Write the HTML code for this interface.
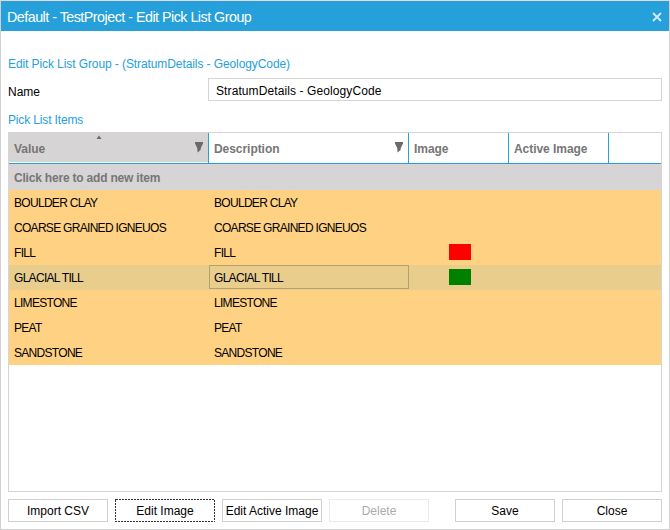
<!DOCTYPE html>
<html><head><meta charset="utf-8">
<style>
*{box-sizing:border-box;margin:0;padding:0}
html,body{width:670px;height:530px;overflow:hidden;background:#fff}
body{position:relative;font-family:"Liberation Sans",sans-serif;font-size:12px;color:#000}
.a{position:absolute;white-space:nowrap}
#win{position:absolute;left:0;top:0;width:670px;height:530px;border:1px solid #d0d0d0;border-top-color:#e4d8d8}
#title{position:absolute;left:1px;top:1px;width:668px;height:30px;background:#25a0da}
.t{line-height:14px}
.blue{color:#25a0da}
.btn{position:absolute;top:499px;height:23px;width:100px;border:1px solid #d0d0d0;background:#fff;text-align:center;line-height:23px;font-size:12px}
.hdr{position:absolute;top:135px;height:29px;color:#767676;font-weight:bold;line-height:29px;padding-left:5px;letter-spacing:-0.05px}
.vl{position:absolute;top:133px;width:1px;height:30px;background:#25a0da}
.row{position:absolute;left:9px;width:652px;height:25px;background:#ffd183}
.cell{position:absolute;line-height:25px;top:1px;letter-spacing:-0.7px}
.funnel{position:absolute;top:142px;width:9px;height:11px}
</style></head><body>
<div id="win"></div>
<div id="title"></div>
<div class="a t" style="left:7px;top:10px;color:#fff;font-size:14.3px;letter-spacing:-0.51px">Default - TestProject - Edit Pick List Group</div>
<svg class="a" style="left:651px;top:11px" width="12" height="12" viewBox="0 0 12 12"><path d="M2 2L10 10M10 2L2 10" stroke="#d2eaf7" stroke-width="1.8"/></svg>

<div class="a t blue" style="left:8px;top:57px;letter-spacing:-0.09px">Edit Pick List Group - (StratumDetails - GeologyCode)</div>
<div class="a t" style="left:8px;top:85px">Name</div>
<div class="a" style="left:208px;top:78px;width:454px;height:23px;border:1px solid #d6d4d4"></div>
<div class="a t" style="left:216px;top:84px;letter-spacing:0.1px">StratumDetails - GeologyCode</div>
<div class="a t blue" style="left:8px;top:113px;letter-spacing:-0.15px">Pick List Items</div>

<!-- grid -->
<div class="a" style="left:8px;top:132px;width:654px;height:360px;border:1px solid #d6d4d4"></div>
<div class="a" style="left:9px;top:133px;width:199px;height:29px;background:#d6d4d4"></div>
<div class="a" style="left:9px;top:162px;width:652px;height:1px;background:#fff"></div>
<div class="a" style="left:9px;top:163px;width:652px;height:1px;background:#25a0da"></div>
<div class="hdr" style="left:9px">Value</div>
<div class="hdr" style="left:209px">Description</div>
<div class="hdr" style="left:409px">Image</div>
<div class="hdr" style="left:509px">Active Image</div>
<div class="vl" style="left:208px"></div>
<div class="vl" style="left:408px"></div>
<div class="vl" style="left:508px"></div>
<div class="vl" style="left:608px"></div>
<svg class="a" style="left:96px;top:135px" width="6" height="4" viewBox="0 0 6 4"><path d="M0.5 4L3 0.5L5.5 4Z" fill="#6a6a6a"/></svg>
<svg class="funnel" style="left:195px" viewBox="0 0 9 11"><path d="M0 0L8 0L8 1.6L5.8 6L5.6 8L2.6 10.6L2.2 6L0 1.6Z" fill="#6a6a6a"/></svg>
<svg class="funnel" style="left:395px" viewBox="0 0 9 11"><path d="M0 0L8 0L8 1.6L5.8 6L5.6 8L2.6 10.6L2.2 6L0 1.6Z" fill="#6a6a6a"/></svg>

<div class="a" style="left:9px;top:164px;width:652px;height:26px;background:#d6d4d4"></div>
<div class="a" style="left:14px;top:165px;line-height:26px;color:#767676;font-weight:bold;letter-spacing:-0.2px">Click here to add new item</div>

<div class="row" style="top:190px"><div class="cell" style="left:5px">BOULDER CLAY</div><div class="cell" style="left:205px">BOULDER CLAY</div></div>
<div class="row" style="top:215px"><div class="cell" style="left:5px">COARSE GRAINED IGNEUOS</div><div class="cell" style="left:205px">COARSE GRAINED IGNEUOS</div></div>
<div class="row" style="top:240px"><div class="cell" style="left:5px">FILL</div><div class="cell" style="left:205px">FILL</div>
  <div class="a" style="left:440px;top:4px;width:22px;height:16px;background:#ff0000"></div></div>
<div class="row" style="top:265px;background:#e9cd8d"><div class="cell" style="left:5px">GLACIAL TILL</div>
  <div class="a" style="left:200px;top:0;width:200px;height:24px;border:1px solid #b4a06c"></div>
  <div class="cell" style="left:205px">GLACIAL TILL</div>
  <div class="a" style="left:440px;top:4px;width:22px;height:16px;background:#008000"></div></div>
<div class="row" style="top:290px"><div class="cell" style="left:5px">LIMESTONE</div><div class="cell" style="left:205px">LIMESTONE</div></div>
<div class="row" style="top:315px"><div class="cell" style="left:5px">PEAT</div><div class="cell" style="left:205px">PEAT</div></div>
<div class="row" style="top:340px"><div class="cell" style="left:5px">SANDSTONE</div><div class="cell" style="left:205px">SANDSTONE</div></div>

<!-- buttons -->
<div class="btn" style="left:8px">Import CSV</div>
<div class="btn" style="left:115px;border:none;line-height:25px"><svg class="a" style="left:0;top:0" width="100" height="23"><rect x="0.5" y="0.5" width="99" height="22" fill="none" stroke="#333" stroke-dasharray="2 1" shape-rendering="crispEdges"/></svg><span style="position:relative">Edit Image</span></div>
<div class="btn" style="left:222px">Edit Active Image</div>
<div class="btn" style="left:329px;color:#ababab;border-color:#eaeaea">Delete</div>
<div class="btn" style="left:455px">Save</div>
<div class="btn" style="left:562px">Close</div>
</body></html>
